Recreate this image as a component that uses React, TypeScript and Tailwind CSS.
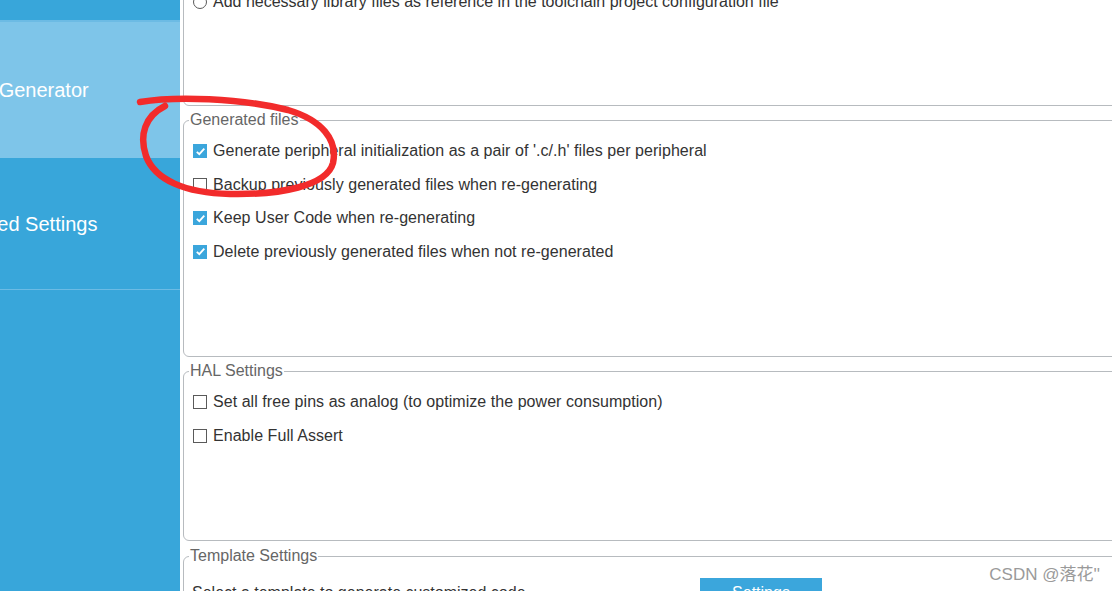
import React from "react";

const font = { fontFamily: '"Liberation Sans", Arial, sans-serif' };

const Check = ({ checked }: { checked: boolean }) =>
  checked ? (
    <span className="flex h-[14px] w-[14px] shrink-0 items-center justify-center bg-[#3ba6dc]">
      <svg width="11" height="11" viewBox="0 0 11 11">
        <path d="M1.8 5.8 L4.3 8.2 L9.3 2.6" fill="none" stroke="#fff" strokeWidth="1.8" />
      </svg>
    </span>
  ) : (
    <span className="h-[14px] w-[14px] shrink-0 border border-[#5a5a5a] bg-white" />
  );

const Row = ({ checked, label }: { checked: boolean; label: string }) => (
  <div className="flex h-[20px] items-center gap-[6px]">
    <Check checked={checked} />
    <span className="whitespace-nowrap text-[16px] tracking-[0.05px] text-[#333]">{label}</span>
  </div>
);

const Group = ({
  title,
  height,
  children,
}: {
  title: string;
  height: string;
  children: React.ReactNode;
}) => (
  <fieldset className={`mr-[-30px] rounded-[6px] border border-[#b7bbbf] ${height}`}>
    <legend className="ml-[5px] px-[1px] text-[16px] leading-[20px] text-[#666]">{title}</legend>
    {children}
  </fieldset>
);

const SideItem = ({
  label,
  className,
  inner,
}: {
  label: string;
  className: string;
  inner: string;
}) => (
  <div className={`flex shrink-0 items-center ${className}`}>
    <div className={`w-[324px] whitespace-nowrap text-center text-[20px] text-white ${inner}`}>
      {label}
    </div>
  </div>
);

export default function App() {
  return (
    <div className="relative flex h-[591px] w-[1112px] overflow-hidden bg-white" style={font}>
      <div className="flex w-[180px] shrink-0 flex-col overflow-hidden bg-[#38a6da]">
        <div className="h-[22px] shrink-0 border-b-2 border-[#6cbbe4]" />
        <SideItem label="Code Generator" className="h-[136px] bg-[#7ec5e9]" inner="ml-[-145px]" />
        <SideItem
          label="Advanced Settings"
          className="h-[132px] border-b border-[#6cbbe4]"
          inner="ml-[-148px]"
        />
      </div>

      <div className="ml-[3px] flex min-w-0 flex-1 flex-col">
        <div className="mr-[-30px] mt-[-30px] h-[136px] shrink-0 rounded-[6px] border border-[#b7bbbf]">
          <div className="mt-[21px] flex h-[20px] items-center gap-[6px] pl-[9px]">
            <span className="h-[14px] w-[14px] shrink-0 rounded-full border border-[#5a5a5a] bg-white" />
            <span className="whitespace-nowrap text-[16px] text-[#333]">
              Add necessary library files as reference in the toolchain project configuration file
            </span>
          </div>
        </div>

        <div className="mt-[4px] shrink-0">
          <Group title="Generated files" height="h-[247px]">
            <div className="flex flex-col gap-[13.5px] pl-[9px] pt-[11px]">
              <Row checked label="Generate peripheral initialization as a pair of '.c/.h' files per peripheral" />
              <Row checked={false} label="Backup previously generated files when re-generating" />
              <Row checked label="Keep User Code when re-generating" />
              <Row checked label="Delete previously generated files when not re-generated" />
            </div>
          </Group>
        </div>

        <div className="mt-[4px] shrink-0">
          <Group title="HAL Settings" height="h-[180px]">
            <div className="flex flex-col gap-[14px] pl-[9px] pt-[11px]">
              <Row checked={false} label="Set all free pins as analog (to optimize the power consumption)" />
              <Row checked={false} label="Enable Full Assert" />
            </div>
          </Group>
        </div>

        <div className="mt-[5px] shrink-0">
          <Group title="Template Settings" height="h-[120px]">
            <div className="flex items-start pl-[8px] pt-[12px]">
              <span className="mt-[5px] w-[508px] whitespace-nowrap text-[16px] leading-[20px] text-[#333]">
                Select a template to generate customized code
              </span>
              <button className="h-[30px] w-[122px] bg-[#3ba6dc] text-[16px] text-white">Settings</button>
            </div>
          </Group>
        </div>
      </div>

      <svg
        className="pointer-events-none absolute left-0 top-0"
        width="1112"
        height="591"
        viewBox="0 0 1112 591"
      >
        <path
          d="M140 102 C 175 96 240 98 288 110 C 322 120 338 140 333 163 C 327 186 280 195 230 194 C 185 193 155 180 146 156 C 139 135 145 116 165 106"
          fill="none"
          stroke="#f22b2b"
          strokeWidth="6.5"
          strokeLinecap="round"
        />
      </svg>

      <div
        className="absolute right-[12px] top-[562px] text-[17px] text-[#9a9a9a]"
        style={{ fontFamily: '"Liberation Sans", "Noto Sans CJK SC", sans-serif' }}
      >
        CSDN @落花''
      </div>
    </div>
  );
}
